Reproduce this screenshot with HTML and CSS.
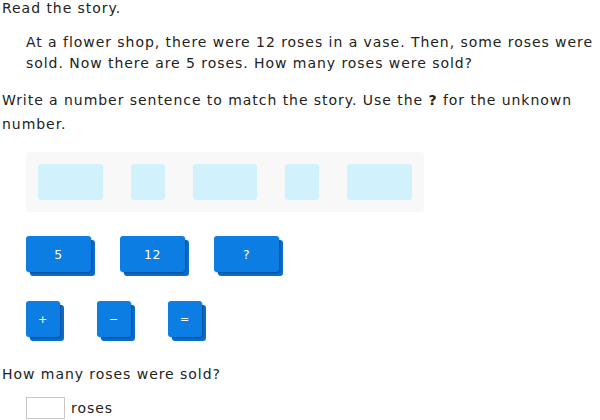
FILE: index.html
```html
<!DOCTYPE html>
<html>
<head>
<meta charset="utf-8">
<link rel="stylesheet" href="styles.css">
</head>
<body>
<div class="page">
  <p class="prompt">Read the story.</p>
  <p class="story">At a flower shop, there were 12 roses in a vase. Then, some roses were sold. Now there are 5 roses. How many roses were sold?</p>
  <p class="instruction">Write a number sentence to match the story. Use the <b class="unknown">?</b> for the unknown number.</p>
  <div class="tray">
    <div class="slot wide"></div>
    <div class="slot narrow"></div>
    <div class="slot wide"></div>
    <div class="slot narrow"></div>
    <div class="slot wide"></div>
  </div>
  <div class="tiles numbers">
    <div class="tile wide">5</div>
    <div class="tile wide">12</div>
    <div class="tile wide">?</div>
  </div>
  <div class="tiles ops">
    <div class="tile narrow op">+</div>
    <div class="tile narrow op">−</div>
    <div class="tile narrow op">=</div>
  </div>
  <p class="question">How many roses were sold?</p>
  <div class="answer">
    <span class="input"></span>
    <span class="unit">roses</span>
  </div>
</div>
</body>
</html>
```
FILE: styles.css
```css
html, body {
  margin: 0;
  padding: 0;
  background: #fff;
}
body {
  font-family: "DejaVu Sans", Verdana, sans-serif;
  font-size: 14px;
  letter-spacing: 0.95px;
  color: #222;
}
.page {
  padding-left: 2px;
}
p {
  margin: 0;
}
.prompt {
  line-height: 17px;
}
.story {
  margin-top: 15px;
  padding-left: 24px;
  line-height: 21px;
}
.instruction {
  margin-top: 14px;
  line-height: 24px;
}
.unknown {
  display: inline-block;
  font-weight: bold;
  letter-spacing: 0;
  margin: 0 1px 0 0;
}
.tray {
  margin: 16px 0 0 24px;
  width: 374px;
  padding: 12px;
  background: #f8f8f8;
  border-radius: 4px;
  display: flex;
  gap: 28px;
}
.slot {
  height: 36px;
  background: #d1f1fd;
  border-radius: 3px;
}
.slot.wide { width: 65px; }
.slot.narrow { width: 34px; }
.tiles {
  display: flex;
  margin-left: 24px;
  padding-bottom: 4px;
}
.numbers {
  margin-top: 24px;
  gap: 29px;
}
.ops {
  margin-top: 25px;
  gap: 37px;
}
.tile {
  height: 36px;
  background: #0b7de3;
  border-radius: 3px;
  color: #fff;
  font-size: 12.5px;
  letter-spacing: 0.6px;
  display: flex;
  align-items: center;
  justify-content: center;
  box-shadow: 1px 1px 2px rgba(0, 0, 0, 0.3), 4px 4px 0 #0a6dcf;
}
.tile.wide { width: 65px; }
.tile.narrow { width: 34px; }
.tile.op {
  font-size: 11px;
}
.question {
  margin-top: 25px;
  line-height: 17px;
}
.answer {
  margin: 14px 0 0 24px;
  display: flex;
  align-items: center;
  gap: 6px;
}
.input {
  width: 37px;
  height: 20px;
  border: 1px solid #c8c8c8;
  background: #fff;
}
.unit {
  line-height: 22px;
}
```
